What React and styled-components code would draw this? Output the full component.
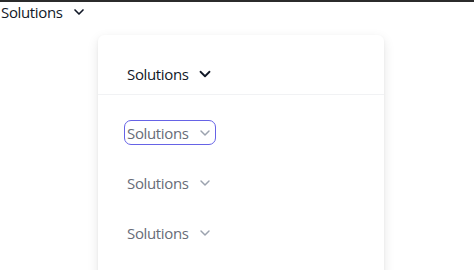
import React from "react";
import styled, { createGlobalStyle } from "styled-components";

const GlobalStyle = createGlobalStyle`
  html, body {
    margin: 0;
    padding: 0;
    background: #ffffff;
    font-family: "Open Sans", "Noto Sans", sans-serif;
  }
`;

const Chevron = ({ size = 16, width = 2.5 }) => (
  <svg
    width={size}
    height={size}
    viewBox="0 0 24 24"
    fill="none"
    stroke="currentColor"
    strokeWidth={width}
    strokeLinecap="round"
    strokeLinejoin="round"
  >
    <path d="m6 9 6 6 6-6" />
  </svg>
);

const App = () => {
  const items = ["Solutions", "Solutions", "Solutions"];
  return (
    <Page>
      <GlobalStyle />
      <TopNav>
        <Trigger $gap={8}>
          Solutions
          <Chevron size={16} />
        </Trigger>
      </TopNav>
      <Panel>
        <PanelHeader>
          <Trigger $gap={7}>
            Solutions
            <Chevron size={18} width={2.4} />
          </Trigger>
        </PanelHeader>
        <List>
          {items.map((label, i) => (
            <Item key={i} $focused={i === 0}>
              {label}
              <Chevron size={16} width={2.2} />
            </Item>
          ))}
        </List>
      </Panel>
    </Page>
  );
};

export default App;

const Page = styled.div`
  width: 474px;
  height: 270px;
  overflow: hidden;
  border-top: 2px solid #2b2b2b;
  box-sizing: border-box;
`;

const TopNav = styled.nav`
  display: flex;
  align-items: center;
  height: 20px;
  padding-left: 1px;
`;

const Trigger = styled.div`
  display: inline-flex;
  align-items: center;
  gap: ${(p) => p.$gap}px;
  font-size: 15px;
  font-weight: 500;
  letter-spacing: -0.35px;
  color: #111827;
  line-height: 20px;
`;

const Panel = styled.div`
  margin: 13px 0 0 98px;
  width: 286px;
  background: #ffffff;
  border-radius: 6px;
  box-shadow: 0 4px 12px rgba(0, 0, 0, 0.1), 0 1px 3px rgba(0, 0, 0, 0.05);
`;

const PanelHeader = styled.div`
  display: flex;
  align-items: center;
  padding: 29px 0 10px 29px;
  border-bottom: 1px solid #f1f2f4;
`;

const List = styled.div`
  display: flex;
  flex-direction: column;
  gap: 25px;
  padding: 25px 0 40px 26px;
`;

const Item = styled.div`
  display: inline-flex;
  align-self: flex-start;
  align-items: center;
  gap: 8px;
  height: 25px;
  padding: 0 2px;
  box-sizing: border-box;
  font-size: 15px;
  letter-spacing: -0.35px;
  color: #676c78;
  border-radius: 7px;
  border: 1.5px solid ${(p) => (p.$focused ? "#6663e6" : "transparent")};

  svg {
    color: #9ca3af;
  }
`;
